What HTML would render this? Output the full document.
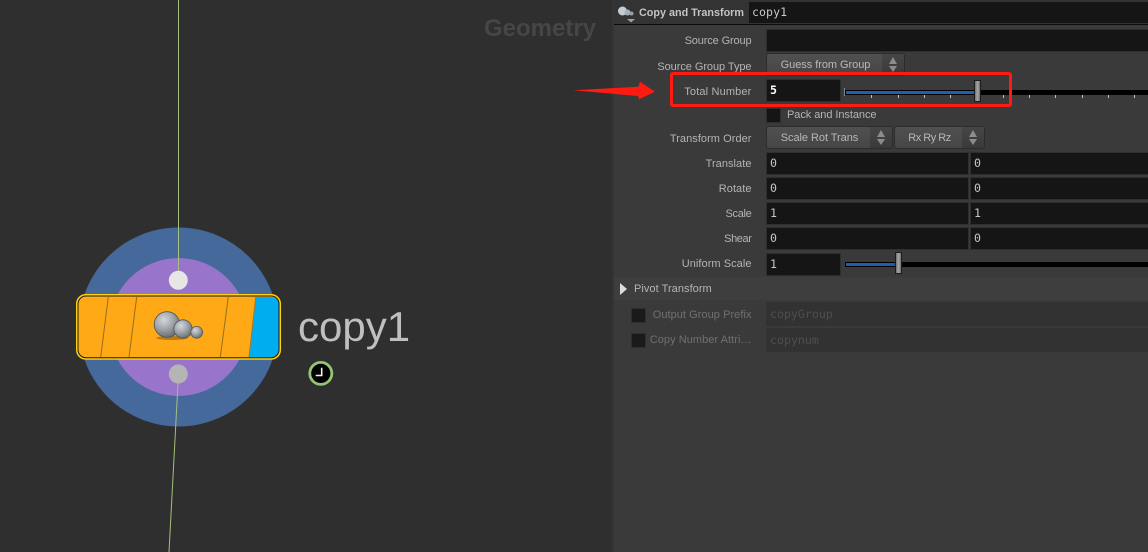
<!DOCTYPE html>
<html><head><meta charset="utf-8">
<style>
html,body{margin:0;padding:0;width:1148px;height:552px;overflow:hidden;background:#2f2f2f}
body{position:relative;font-family:"Liberation Sans",sans-serif;font-size:11px;color:#b4b4b4}
div,span{position:absolute;white-space:nowrap;box-sizing:border-box}
.l{right:396.500px;line-height:14px;text-align:right;letter-spacing:.05px}
.f{background:#151515;box-shadow:0 0 0 1px #2e2e2e;left:767px;height:21px}
.m{font-family:"DejaVu Sans Mono","Liberation Mono",monospace;font-size:11.6px;line-height:21px;padding-left:3px;color:#c8c8c8}
.b{height:21px;top:0;background:linear-gradient(#505050,#464646);border-radius:2px;box-shadow:0 0 0 1px #2c2c2c;color:#b8b8b8;line-height:22px;text-align:center}
.a{top:0;right:0;width:22px;height:21px;background:linear-gradient(#464646,#3a3a3a);border-radius:0 2px 2px 0}
.a:before{content:"";position:absolute;left:7px;top:3px;border:4px solid transparent;border-top:0;border-bottom:7px solid #8c8c8c}
.a:after{content:"";position:absolute;left:7px;top:12px;border:4px solid transparent;border-bottom:0;border-top:6px solid #8c8c8c}
.c{width:13px;height:13px;background:#151515;box-shadow:0 0 0 1px #2e2e2e}
.t{width:1px;height:3px;top:95px;background:#c0c0c0}
.h{width:5px;background:linear-gradient(90deg,#6e6e6e,#a8a8a8 50%,#707070);box-shadow:0 0 0 1px #1c1c1c}
.d{left:766px;width:382px;height:24px;background:#323232;font-family:"DejaVu Sans Mono","Liberation Mono",monospace;font-size:11.6px;line-height:24px;padding-left:4px;color:#4e4e4e}
</style></head><body>

<svg width="612" height="552" style="position:absolute;left:0;top:0">
<defs>
<radialGradient id="s" cx=".38" cy=".32" r=".75"><stop offset="0" stop-color="#d4d7da"/><stop offset=".5" stop-color="#a0a4a9"/><stop offset="1" stop-color="#5f656c"/></radialGradient>
</defs>
<circle cx="178.5" cy="327" r="99.5" fill="#45699b"/>
<circle cx="178.5" cy="327" r="69" fill="#9874cb"/>
<line x1="178.5" y1="0" x2="178.5" y2="272" stroke="#a5c07e" stroke-width="1"/>
<line x1="178" y1="383" x2="169" y2="552" stroke="#a5c07e" stroke-width="1"/>
<circle cx="178.3" cy="280.3" r="9.5" fill="#e6e6e6"/>
<circle cx="178.3" cy="374" r="9.5" fill="#b5b5b5"/>
<rect x="76.700" y="294.700" width="203.600" height="64.300" rx="9" fill="#ffa916" stroke="#ffd400" stroke-width="1.400"/>
<path d="M255.700 297H271a8 8 0 0 1 8 8v44a8 8 0 0 1-8 8H249Z" fill="#00aeef"/>
<rect x="78" y="296" width="201" height="61.700" rx="8" fill="none" stroke="#1c1c1c" stroke-width="1"/>
<g stroke="#96701f" stroke-width="1" fill="none">
<path d="M108.300 297L100.700 357M136.700 297L129 357M228.300 297L220.300 357"/>
<path d="M255.700 297L249 357" stroke="#a87a20"/>
</g>
<ellipse cx="172" cy="338" rx="16" ry="2" fill="#a06a10" opacity=".7"/>
<circle cx="167" cy="324.500" r="12.800" fill="url(#s)" stroke="#4e555c" stroke-width=".8"/>
<circle cx="183" cy="329" r="9.200" fill="url(#s)" stroke="#4e555c" stroke-width=".8"/>
<circle cx="196.700" cy="332.300" r="5.900" fill="url(#s)" stroke="#4e555c" stroke-width=".8"/>
<circle cx="320.800" cy="373.400" r="11" fill="#000" stroke="#95c574" stroke-width="2.800"/>
<path d="M321.700 367.700V375.500H315.700" fill="none" stroke="#f2f2e8" stroke-width="1.600"/>
</svg>

<div style="left:298px;top:303px;font-size:42px;line-height:48px;color:#bfbfbf">copy1</div>
<div style="left:484px;top:14px;font-size:24px;line-height:30px;font-weight:bold;color:#464646">Geometry</div>

<!-- panel -->
<div style="left:612px;top:0;width:536px;height:552px;background:#3a3a3a"></div>
<div style="left:612px;top:0;width:2px;height:552px;background:#343434"></div>
<div style="left:614px;top:0;width:534px;height:24px;background:#333"></div>
<div style="left:614px;top:24px;width:534px;height:1px;background:#0c0c0c"></div>

<svg width="20" height="24" style="position:absolute;left:616px;top:0">
<circle cx="6.500" cy="11" r="4.500" fill="#c4ccd2"/><circle cx="11.500" cy="12.500" r="3" fill="#a8b0b6"/><circle cx="15.500" cy="13.500" r="2" fill="#98a0a6"/>
<path d="M11 19H19L15 22.500Z" fill="#a0a0a0"/>
</svg>
<div style="left:639px;top:6px;font-weight:bold;line-height:14px;font-size:10.800px;color:#c4c4c4">Copy and Transform</div>
<div class="f m" style="left:749px;top:2px;width:399px;box-shadow:none;color:#c8c8c8;letter-spacing:.05px">copy1</div>

<div class="l" style="top:34px;letter-spacing:-.13px">Source Group</div>
<div class="f" style="top:30px;width:381px"></div>

<div class="l" style="top:60px;letter-spacing:-.06px">Source Group Type</div>
<div style="left:767px;top:54px;width:137px;height:21px"><div class="b" style="left:0;width:137px;padding-right:20px;letter-spacing:-.05px">Guess from Group</div><div class="a"></div></div>

<div class="l" style="top:85px;letter-spacing:.15px">Total Number</div>
<div class="f m" style="top:80px;width:73px;font-weight:bold;color:#fff">5</div>
<div style="left:845px;top:89.500px;width:303px;height:5px;background:#000"></div>
<div style="left:846px;top:90.500px;width:130px;height:3px;background:#1f5fae"></div>
<div style="left:844px;top:88px;width:1px;height:8px;background:#888"></div>
<span class="t" style="left:871px"></span><span class="t" style="left:898px"></span><span class="t" style="left:924px"></span><span class="t" style="left:950px"></span><span class="t" style="left:1003px"></span><span class="t" style="left:1029px"></span><span class="t" style="left:1055px"></span><span class="t" style="left:1082px"></span><span class="t" style="left:1108px"></span><span class="t" style="left:1134px"></span>
<div class="h" style="left:975px;top:81px;height:20px"></div>

<div class="c" style="left:767px;top:109px"></div>
<div style="left:787px;top:108px;line-height:14px;letter-spacing:-.06px">Pack and Instance</div>

<div class="l" style="top:132px">Transform Order</div>
<div style="left:767px;top:127px;width:125px;height:21px"><div class="b" style="left:0;width:125px;padding-right:20px;letter-spacing:-.05px">Scale Rot Trans</div><div class="a"></div></div>
<div style="left:895px;top:127px;width:89px;height:21px"><div class="b" style="left:0;width:89px;padding-right:20px;letter-spacing:-.5px">Rx Ry Rz</div><div class="a"></div></div>

<div class="l" style="top:157px">Translate</div>
<div class="f m" style="top:153px;width:201px">0</div><div class="f m" style="left:971px;top:153px;width:177px">0</div>
<div class="l" style="top:182px">Rotate</div>
<div class="f m" style="top:178px;width:201px">0</div><div class="f m" style="left:971px;top:178px;width:177px">0</div>
<div class="l" style="top:207px;letter-spacing:-.3px">Scale</div>
<div class="f m" style="top:203px;width:201px">1</div><div class="f m" style="left:971px;top:203px;width:177px">1</div>
<div class="l" style="top:232px;letter-spacing:-.4px">Shear</div>
<div class="f m" style="top:228px;width:201px">0</div><div class="f m" style="left:971px;top:228px;width:177px">0</div>

<div class="l" style="top:257px">Uniform Scale</div>
<div class="f m" style="top:254px;width:73px">1</div>
<div style="left:845px;top:261.500px;width:303px;height:5px;background:#000"></div>
<div style="left:846px;top:262.500px;width:52px;height:3px;background:#1f5fae"></div>
<div class="h" style="left:896px;top:253px;height:20px"></div>

<div style="left:614px;top:277px;width:534px;height:23px;background:#3e3e3e"></div>
<div style="left:620px;top:283px;width:0;height:0;border-left:7px solid #ddd;border-top:6px solid transparent;border-bottom:6px solid transparent"></div>
<div style="left:634px;top:282px;line-height:14px;letter-spacing:.05px">Pivot Transform</div>

<div class="c" style="left:632px;top:309px;background:#1a1a1a"></div>
<div class="l" style="top:308px;color:#707070">Output Group Prefix</div>
<div class="d" style="top:302px">copyGroup</div>
<div class="c" style="left:632px;top:334px;background:#1a1a1a"></div>
<div class="l" style="top:333px;color:#707070">Copy Number Attri…</div>
<div class="d" style="top:328px">copynum</div>

<!-- annotations -->
<div style="left:670px;top:72px;width:342px;height:35px;border:3px solid #ff1a12;border-radius:3px"></div>
<svg width="90" height="24" style="position:absolute;left:570px;top:79px">
<path d="M3.300 11.300L68.300 7.700L70 2.700L85 12.700L69 20.300L68 17Z" fill="#ff1a12"/>
</svg>
</body></html>
